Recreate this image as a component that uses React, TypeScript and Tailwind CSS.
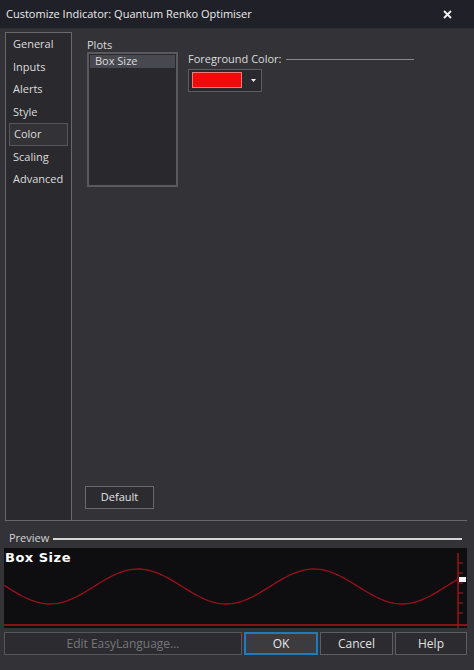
import React from 'react';

const navItems = ['General', 'Inputs', 'Alerts', 'Style', 'Color', 'Scaling', 'Advanced'];

// sine wave for the preview, in chart-local coordinates (chart starts at x=4, y=548)
const wavePath = (() => {
  const pts: string[] = [];
  for (let x = 0; x <= 454; x += 3) {
    const gx = x + 4;
    const y = 38.5 + 17.5 * Math.cos((2 * Math.PI * (gx - 50)) / 176);
    pts.push(`${x === 0 ? 'M' : 'L'}${x},${y.toFixed(2)}`);
  }
  return pts.join(' ');
})();

const PreviewChart: React.FC = () => (
  <div className="relative ml-[4px] mr-[7px] h-[80px] bg-[#0e0e11]">
    <span className="absolute left-[1px] top-[0px] text-[13px] font-bold tracking-[0.5px] text-white" style={{ fontFamily: '"DejaVu Sans", sans-serif' }}>
      Box Size
    </span>
    <svg width="463" height="80" className="block">
      <path d={wavePath} fill="none" stroke="#9e0f1a" strokeWidth="1.3" />
      <line x1="0" y1="77" x2="463" y2="77" stroke="#b0141e" strokeWidth="1.5" />
      <line x1="454" y1="5" x2="454" y2="80" stroke="#b0141e" strokeWidth="1.3" />
      {[15, 25, 35, 45, 55, 65].map((y) => (
        <line key={y} x1="454" y1={y} x2="459" y2={y} stroke="#b0141e" strokeWidth="1" />
      ))}
      <rect x="455" y="29" width="7" height="5" fill="#f4f4f4" />
    </svg>
  </div>
);

export default function App() {
  return (
    <div
      className="w-[474px] h-[670px] bg-[#333337] flex flex-col text-[11px] text-[#dcdcdc] overflow-hidden"
      style={{ fontFamily: '"Open Sans", "Noto Sans", sans-serif' }}
    >
      {/* title bar */}
      <div className="h-[29px] bg-[#1f2028] flex items-center justify-between pl-[6px] pr-[22px] border-b border-[#2a2b33]">
        <span className="text-[11px] text-[#ececec]">Customize Indicator: Quantum Renko Optimiser</span>
        <svg width="9" height="9" viewBox="0 0 9 9">
          <path d="M1 1 L8 8 M8 1 L1 8" stroke="#f2f2f2" strokeWidth="1.8" />
        </svg>
      </div>

      {/* top area */}
      <div className="flex pt-[3px] pl-[5px] pr-[7px] h-[492px]">
        <div className="w-[67px] h-full border border-[#68686c] bg-[#2a2a2e] px-[3px] flex flex-col">
          {navItems.map((item) => (
            <div
              key={item}
              className={
                'h-[22.5px] flex items-center pl-[4px] ' +
                (item === 'Color' ? 'border border-[#55555a] bg-[#333337] pl-[3px]' : '')
              }
            >
              {item}
            </div>
          ))}
        </div>

        <div className="flex-1 border-b border-[#68686c] flex flex-col pl-[15px] pt-[6px] pb-[11px]">
          <div className="flex">
            <div className="flex flex-col">
              <span className="leading-[14px]">Plots</span>
              <div className="w-[91px] h-[135px] border-2 border-[#5a5a5e] bg-[#29282d] p-[1px]">
                <div className="h-[13px] bg-[#474850] flex items-center pl-[5px]">Box Size</div>
              </div>
            </div>
            <div className="ml-[10px] mt-[13px] flex flex-col">
              <div className="flex items-center w-[226px]">
                <span>Foreground Color:</span>
                <div className="flex-1 ml-[5px] h-px bg-[#8a8a8e]" />
              </div>
              <div className="mt-[1px] w-[74px] h-[23px] border border-[#5e5e62] bg-[#2a2a2e] flex items-center pl-[3px]">
                <div className="w-[50px] h-[16px] bg-[#f20a0a] border border-[#f07a7a]" />
                <svg width="5" height="3" viewBox="0 0 5 3" className="ml-[9px]">
                  <path d="M0 0 L5 0 L2.5 3 Z" fill="#f0f0f0" />
                </svg>
              </div>
            </div>
          </div>
          <div className="mt-auto -ml-[2px] w-[69px] h-[23px] border border-[#69696d] bg-[#2b2b30] flex items-center justify-center text-[#e4e4e4]">
            Default
          </div>
        </div>
      </div>

      {/* preview */}
      <div className="flex items-center h-[27px] pt-[8px] pl-[9px] pr-[12px]">
        <span className="text-[#d4d4d4]">Preview</span>
        <div className="flex-1 ml-[4px] h-[2px] bg-[#d6d6d6]" />
      </div>
      <PreviewChart />

      {/* buttons */}
      <div className="flex mt-[4px] ml-[4px] mr-[7px] gap-[2px] h-[23px] text-[12px]">
        <div className="w-[238px] border border-[#58585c] bg-[#2c2c30] flex items-center justify-center text-[#76767a]">
          Edit EasyLanguage...
        </div>
        <div className="w-[74px] border-2 border-[#1c7cc0] bg-[#3b3b40] flex items-center justify-center text-[#e8e8e8]">
          OK
        </div>
        <div className="w-[73px] border border-[#5e5e62] bg-[#2c2c30] flex items-center justify-center text-[#e0e0e0]">
          Cancel
        </div>
        <div className="flex-1 border border-[#5e5e62] bg-[#2c2c30] flex items-center justify-center text-[#e0e0e0]">
          Help
        </div>
      </div>
    </div>
  );
}
